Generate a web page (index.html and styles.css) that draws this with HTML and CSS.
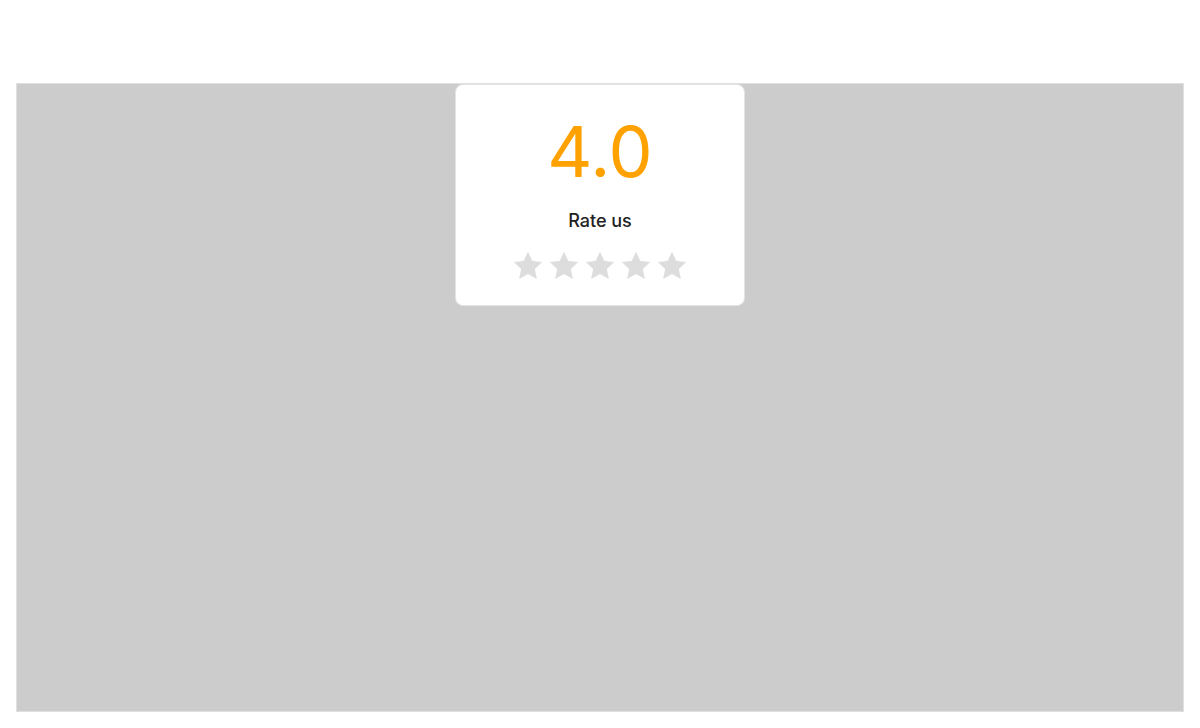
FILE: index.html
```html
<!DOCTYPE html>
<html>
<head>
<meta charset="utf-8">
<link rel="stylesheet" href="styles.css">
</head>
<body>
<div class="stage">
  <div class="card">
    <div class="score">4.0</div>
    <div class="label">Rate us</div>
    <div class="stars">
      <svg class="star" viewBox="0 0 24 24"><path d="M12 2.5l2.9 6.1 6.6.8-4.9 4.6 1.3 6.6L12 17.3l-5.9 3.3 1.3-6.6-4.9-4.6 6.6-.8z"/></svg>
      <svg class="star" viewBox="0 0 24 24"><path d="M12 2.5l2.9 6.1 6.6.8-4.9 4.6 1.3 6.6L12 17.3l-5.9 3.3 1.3-6.6-4.9-4.6 6.6-.8z"/></svg>
      <svg class="star" viewBox="0 0 24 24"><path d="M12 2.5l2.9 6.1 6.6.8-4.9 4.6 1.3 6.6L12 17.3l-5.9 3.3 1.3-6.6-4.9-4.6 6.6-.8z"/></svg>
      <svg class="star" viewBox="0 0 24 24"><path d="M12 2.5l2.9 6.1 6.6.8-4.9 4.6 1.3 6.6L12 17.3l-5.9 3.3 1.3-6.6-4.9-4.6 6.6-.8z"/></svg>
      <svg class="star" viewBox="0 0 24 24"><path d="M12 2.5l2.9 6.1 6.6.8-4.9 4.6 1.3 6.6L12 17.3l-5.9 3.3 1.3-6.6-4.9-4.6 6.6-.8z"/></svg>
    </div>
  </div>
</div>
</body>
</html>
```
FILE: styles.css
```css
html, body {
  margin: 0;
  padding: 0;
  background: #ffffff;
  font-family: Inter, "Liberation Sans", sans-serif;
}
body {
  padding: 83px 16px 16px 16px;
}
.stage {
  height: 627px;
  background: #cccccc;
  border: 1px solid #e0e0e0;
  display: flex;
  justify-content: center;
  align-items: flex-start;
}
.card {
  width: 288px;
  background: #ffffff;
  border: 1px solid #e4e4e4;
  border-radius: 8px;
  display: flex;
  flex-direction: column;
  align-items: center;
  padding: 27px 0 21px 0;
}
.score {
  color: #ffa200;
  font-size: 70px;
  font-weight: 400;
  line-height: 80px;
}
.label {
  color: #222222;
  font-size: 18px;
  font-weight: 500;
  line-height: 22px;
  margin-top: 18px;
}
.stars {
  display: flex;
  margin-top: 16px;
}
.star {
  width: 36px;
  height: 36px;
  fill: #dddddd;
}
```
